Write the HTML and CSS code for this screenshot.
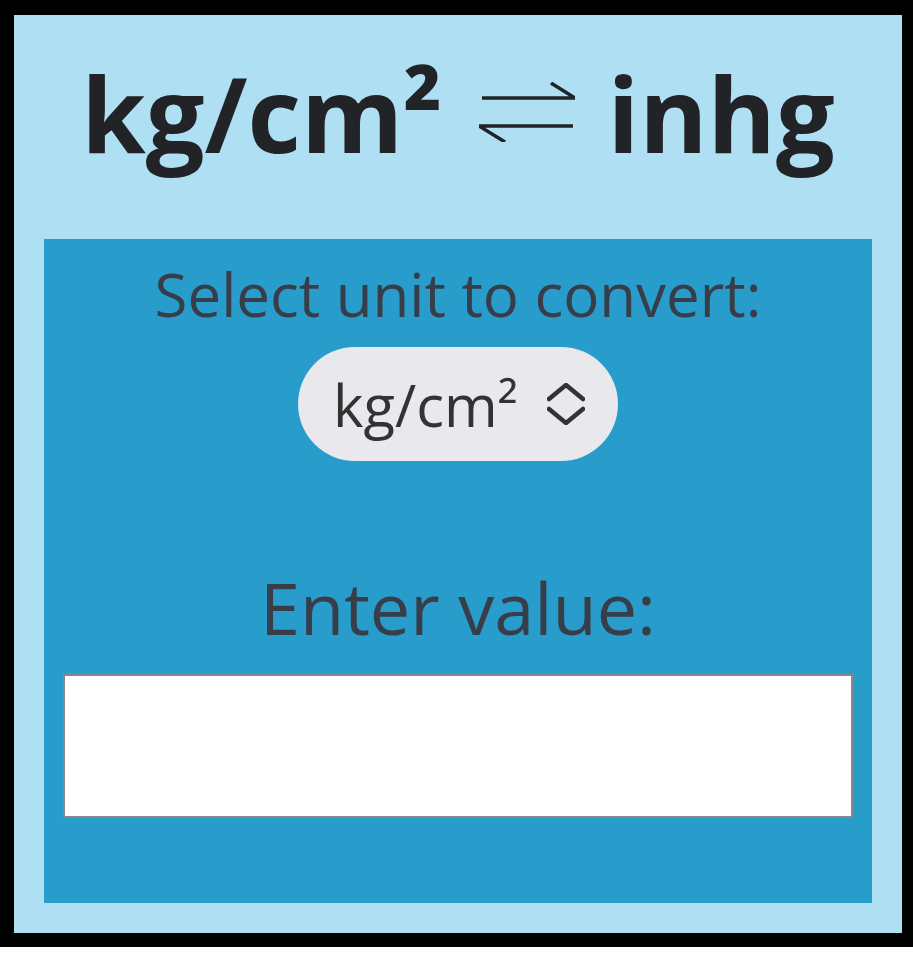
FILE: index.html
```html
<!DOCTYPE html>
<html lang="en">
<head>
    <meta charset="UTF-8">
    <meta name="viewport" content="width=device-width, initial-scale=1.0">
    <title>kg/cm² to inhg</title>
    <link rel="stylesheet" href="styles.css">
</head>
<body>

<div class="frame">
    <h1 class="title">kg/cm²<svg class="swap" width="96" height="60" viewBox="0 0 96 60"><path d="M3 16H96M72 1L96 16M94 44H0L26 60"/></svg>inhg</h1>

    <div class="panel">
        <label class="unit-label" for="unit">Select unit to convert:</label>
        <div class="pill">
            <select id="unit">
                <option>kg/cm²</option>
                <option>inhg</option>
            </select>
            <svg class="chevron" width="38" height="42" viewBox="0 0 38 42"><path d="M2 16L19 2L36 16M2 26L19 40L36 26"/></svg>
        </div>

        <label class="value-label" for="value">Enter value:</label>
        <input type="number" id="value">
    </div>
</div>

</body>
</html>
```

FILE: styles.css
```css
body{
    font-family:"Open Sans", Arial, sans-serif;
    background-color:#ffffff;
    margin:0;
    padding:0;
}
.frame{
    border-style:solid;
    border-color:#000;
    border-width:15px 11px 14px 14px;
    background-color:#afdff2;
    padding:0 30px 30px;
}
.title{
    margin:35px 0 64px;
    font-size:104px;
    line-height:125px;
    font-weight:700;
    color:#222326;
    text-align:center;
}
.swap{
    vertical-align:11px;
    margin:0 33px 0 36px;
    fill:none;
    stroke:#222326;
    stroke-width:3.5;
}
.panel{
    background-color:#289ccb;
    padding:20px 19px 85px;
    display:flex;
    flex-direction:column;
    align-items:center;
}
.unit-label{
    font-size:60px;
    line-height:70px;
    color:#383e49;
}
.pill{
    margin-top:18px;
    width:320px;
    height:114px;
    box-sizing:border-box;
    padding:0 33px 0 35px;
    border-radius:57px;
    background-color:#e9e9ed;
    display:flex;
    align-items:center;
    justify-content:space-between;
}
.pill select{
    appearance:none;
    -webkit-appearance:none;
    border:none;
    background:transparent;
    font-family:"Open Sans", Arial, sans-serif;
    font-size:58px;
    color:#333;
    padding:0;
    margin:0;
    outline:none;
}
.chevron{
    fill:none;
    stroke:#333;
    stroke-width:4.5;
    stroke-linecap:round;
    stroke-linejoin:round;
}
.value-label{
    margin-top:103px;
    font-size:72px;
    line-height:86px;
    color:#383e49;
}
input{
    margin-top:24px;
    width:100%;
    height:144px;
    box-sizing:border-box;
    border:2px solid #888;
    background-color:#fff;
    font-size:40px;
}
```
